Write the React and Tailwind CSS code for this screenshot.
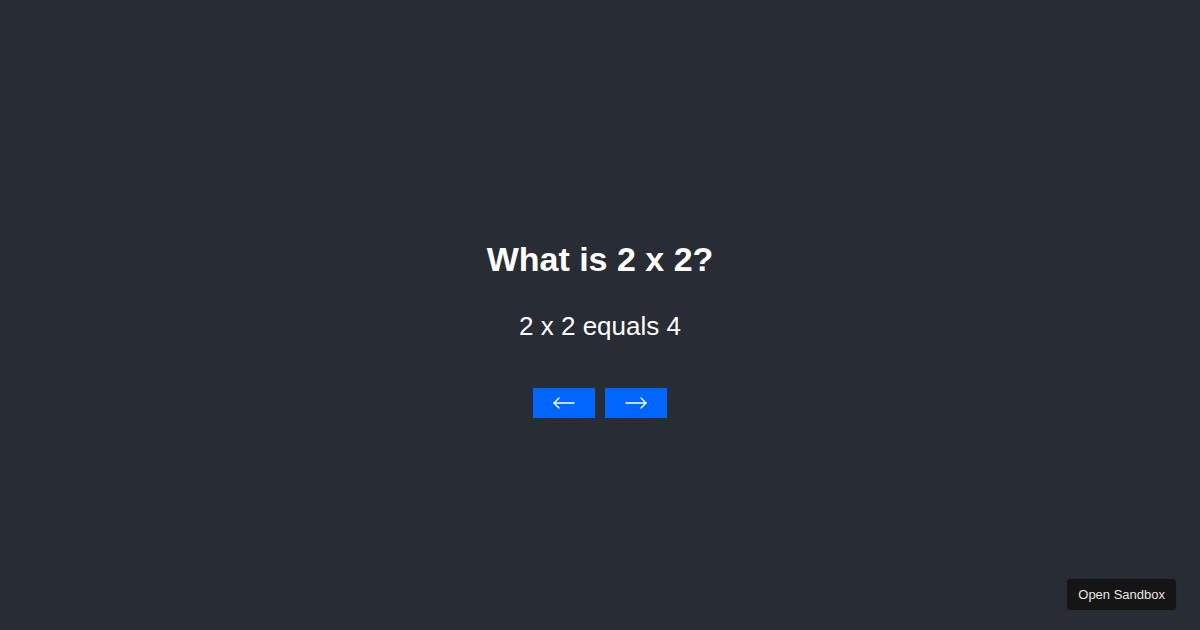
import React from "react";

const Arrow = ({ dir }) => (
  <svg width="22" height="12" viewBox="0 0 22 12" fill="none" stroke="white" strokeWidth="1.4" strokeLinecap="round">
    {dir === "left" ? (
      <>
        <path d="M1 6h20" />
        <path d="M6 1 1 6l5 5" />
      </>
    ) : (
      <>
        <path d="M1 6h20" />
        <path d="M16 1l5 5-5 5" />
      </>
    )}
  </svg>
);

const App = () => {
  return (
    <div className="relative flex h-[630px] w-full flex-col items-center justify-center bg-[#282c34] font-['Liberation_Sans',Arial,sans-serif] text-white">
      <div className="flex flex-col items-center pt-[28px]">
        <h1 className="text-[34px] font-bold leading-[39px]">What is 2 x 2?</h1>
        <p className="mt-[32px] text-[26px] leading-[30px]">2 x 2 equals 4</p>
        <div className="mt-[47px] flex gap-[10px]">
          <button className="flex h-[30px] w-[62px] items-center justify-center bg-[#0066ff]">
            <Arrow dir="left" />
          </button>
          <button className="flex h-[30px] w-[62px] items-center justify-center bg-[#0066ff]">
            <Arrow dir="right" />
          </button>
        </div>
      </div>

      <button className="absolute bottom-[19px] right-[23px] flex h-[33px] items-center rounded-[4px] border border-[#2a2a2a] bg-[#151515] px-[11px] text-[13px] text-[#e6e6e6]">
        Open Sandbox
      </button>
    </div>
  );
};

export default App;
